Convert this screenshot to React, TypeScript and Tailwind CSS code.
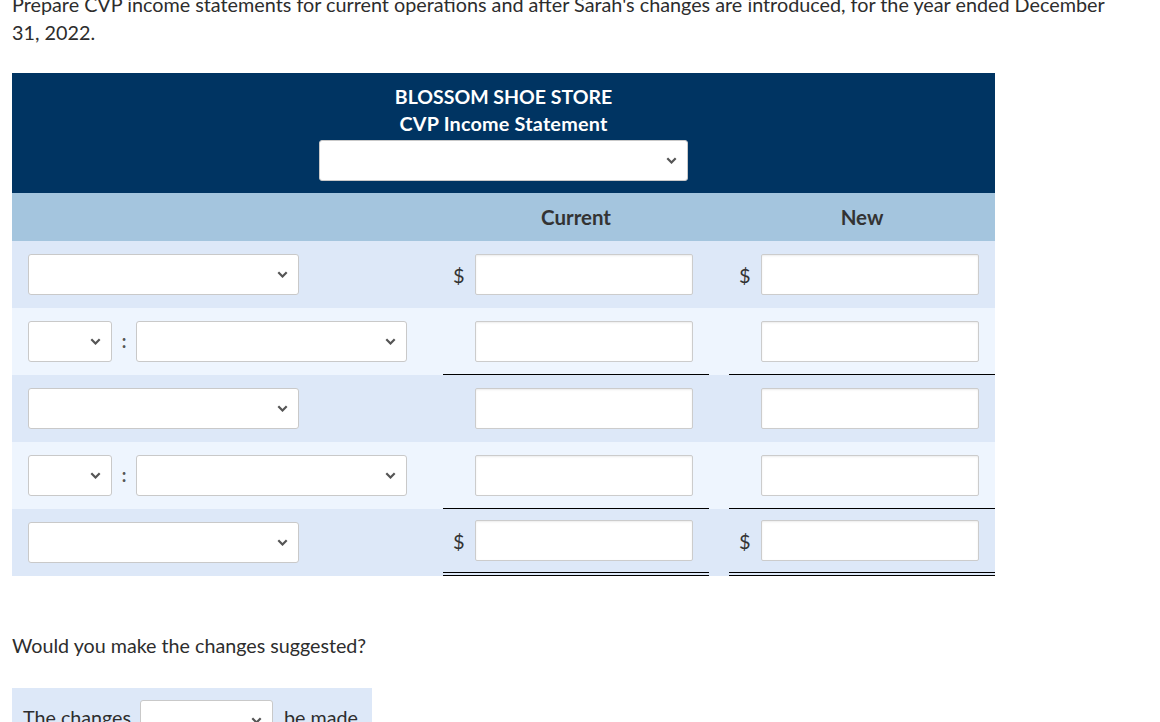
import React from "react";

const font = { fontFamily: "Lato, 'Noto Sans', sans-serif" };

function Chevron() {
  return (
    <svg width="11" height="7" viewBox="0 0 11 7" className="shrink-0">
      <path d="M1.3 1.3l4.2 4.2 4.2-4.2" fill="none" stroke="#555" strokeWidth="2.2" />
    </svg>
  );
}

function Select({ className }: { className: string }) {
  return (
    <div
      className={`flex items-center justify-end rounded-[3px] border border-[#c9c9c9] bg-white pr-[10px] ${className}`}
    >
      <Chevron />
    </div>
  );
}

function Box() {
  return <div className="h-[41px] w-[218px] rounded-[2px] border border-[#cccccc] bg-white shadow-[inset_0_1px_2px_rgba(0,0,0,0.08)]" />;
}

type Row = { split: boolean; dollar: boolean; line: "none" | "single" | "double"; dark: boolean };

const rows: Row[] = [
  { split: false, dollar: true, line: "none", dark: true },
  { split: true, dollar: false, line: "single", dark: false },
  { split: false, dollar: false, line: "none", dark: true },
  { split: true, dollar: false, line: "single", dark: false },
  { split: false, dollar: true, line: "double", dark: true },
];

function ValueCell({ row }: { row: Row }) {
  const border =
    row.line === "single"
      ? "border-b border-black"
      : row.line === "double"
        ? "border-b-4 border-double border-black"
        : "";
  return (
    <div className={`flex h-full items-center pl-[10px] ${border}`}>
      <span className="w-[22px] text-[20px] text-[#333]">{row.dollar ? "$" : ""}</span>
      <Box />
    </div>
  );
}

export default function App() {
  return (
    <div className="min-h-screen bg-white text-[#2d2d2d]" style={font}>
      <div className="mt-[-10px] px-[12px] text-[19.8px] leading-[28px] whitespace-nowrap">
        Prepare CVP income statements for current operations and after Sarah's changes are introduced, for the year ended December
        <br />
        31, 2022.
      </div>

      <div className="ml-[12px] mt-[27px] w-[983px]">
        <div className="flex h-[120px] flex-col items-center bg-[#003462] pt-[10px] text-white">
          <div className="text-[19.5px] font-bold leading-[27px]">BLOSSOM SHOE STORE</div>
          <div className="text-[19.8px] font-bold leading-[27px] tracking-[0.2px]">CVP Income Statement</div>
          <Select className="mt-[3px] h-[41px] w-[369px]" />
        </div>

        <div className="grid h-[48px] grid-cols-[431px_266px_20px_266px] items-center bg-[#a4c5de] text-[20.5px] font-bold text-[#333]">
          <div />
          <div className="text-center">Current</div>
          <div />
          <div className="text-center">New</div>
        </div>

        {rows.map((row, i) => (
          <div
            key={i}
            className={`grid h-[67px] grid-cols-[431px_266px_20px_266px] ${row.dark ? "bg-[#dde8f8]" : "bg-[#eef5fe]"}`}
          >
            <div className="flex items-center pl-[16px]">
              {row.split ? (
                <>
                  <Select className="h-[41px] w-[84px]" />
                  <span className="w-[24px] text-center text-[18px] font-bold text-[#555]">:</span>
                  <Select className="h-[41px] w-[271px]" />
                </>
              ) : (
                <Select className="h-[41px] w-[271px]" />
              )}
            </div>
            <ValueCell row={row} />
            <div />
            <ValueCell row={row} />
          </div>
        ))}
      </div>

      <div className="mt-[56px] px-[12px] text-[19.7px] leading-[28px]">Would you make the changes suggested?</div>

      <div className="ml-[12px] mt-[28px] flex w-[360px] items-start bg-[#dde8f8] pl-[11px] pt-[12px] pb-[12px] text-[19.7px]">
        <span className="mt-[4px] w-[117px] leading-[28px]">The changes</span>
        <Select className="h-[41px] w-[133px]" />
        <span className="ml-[11px] mt-[4px] leading-[28px]">be made</span>
      </div>
    </div>
  );
}
